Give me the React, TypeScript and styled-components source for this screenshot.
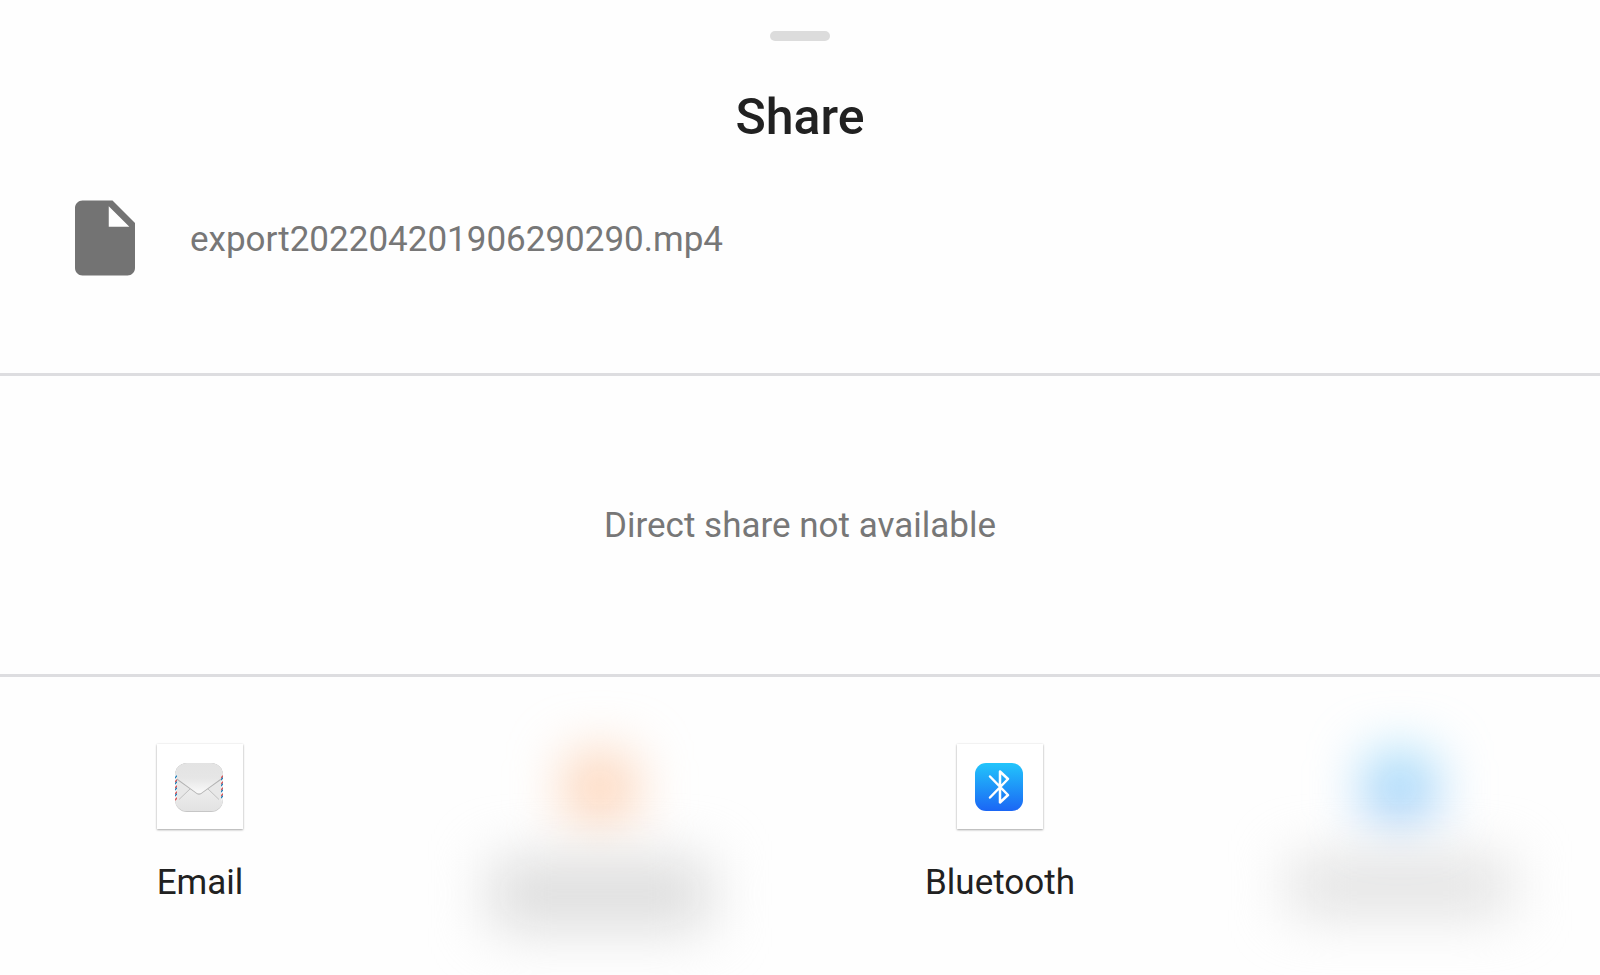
import React from "react";
import styled, { createGlobalStyle } from "styled-components";

const GlobalStyle = createGlobalStyle`
  * { box-sizing: border-box; }
  body {
    margin: 0;
    background: #fefefe;
    font-family: Roboto, "Liberation Sans", sans-serif;
    color: #212121;
  }
`;

const Sheet = styled.main`
  display: flex;
  flex-direction: column;
  min-height: 100vh;
  overflow: hidden;
`;

const Header = styled.header`
  display: flex;
  flex-direction: column;
  align-items: center;
  padding-top: 31px;
`;

const Handle = styled.div`
  width: 60px;
  height: 10px;
  border-radius: 5px;
  background: #dcdcdc;
`;

const Title = styled.h1`
  margin: 46px 0 0;
  font-size: 50px;
  line-height: 60px;
  font-weight: 500;
`;

const FileRow = styled.section`
  display: flex;
  align-items: center;
  gap: 40px;
  padding: 46px 60px 90px;
  border-bottom: 3px solid #dddde0;
`;

const FileIcon = styled.svg`
  width: 90px;
  height: 90px;
  flex: none;
  fill: #737373;
`;

const Body = styled.p`
  margin: 0;
  font-size: 35px;
  line-height: 44px;
  color: #777;
`;

const FileName = styled(Body)`
  padding-top: 4px;
`;

const DirectShare = styled.section`
  display: flex;
  align-items: center;
  justify-content: center;
  padding: 128px 60px 126px;
  border-bottom: 3px solid #dddde0;
`;

const Targets = styled.section`
  display: grid;
  grid-template-columns: repeat(4, 1fr);
  flex: 1;
  padding-top: 67px;
`;

const Target = styled.button`
  display: flex;
  flex-direction: column;
  align-items: center;
  justify-content: flex-start;
  gap: 32px;
  padding: 0;
  border: 0;
  background: none;
  font: inherit;
  color: inherit;
`;

const Tile = styled.span`
  display: flex;
  align-items: center;
  justify-content: center;
  width: 86px;
  height: 85px;
  background: #fff;
  box-shadow: 0 1px 2px rgba(0, 0, 0, 0.32), 0 0 2px rgba(0, 0, 0, 0.08);
`;

const AppIcon = styled.svg`
  width: 52px;
  height: 52px;
`;

const Label = styled.span`
  font-size: 35px;
  line-height: 44px;
`;

const IconBlur = styled.span<{ $fill: string }>`
  width: 64px;
  height: 64px;
  border-radius: 12px;
  background: ${(p) => p.$fill};
  filter: blur(28px);
`;

const LabelBlur = styled.span<{ $height: number; $color: string }>`
  width: 220px;
  height: ${(p) => p.$height}px;
  background: ${(p) => p.$color};
  filter: blur(28px);
`;

const BlurTarget = styled(Target)`
  gap: 40px;
  padding-top: 12px;
`;

const edgeMarks = [0, 1, 2, 3, 4, 5, 6, 7, 8, 9, 10, 11];
const markColors = ["#1e82bd", "#f3f3f3", "#d95558"];

function EmailIcon() {
  return (
    <AppIcon viewBox="1 0 52 52" aria-hidden="true">
      <defs>
        <linearGradient id="flap" x1="0" y1="0" x2="0" y2="1">
          <stop offset="0" stopColor="#e3e3e3" />
          <stop offset="0.5" stopColor="#e6e6e6" />
          <stop offset="1" stopColor="#fafafa" />
        </linearGradient>
        <linearGradient id="front" x1="0" y1="0" x2="0" y2="1">
          <stop offset="0" stopColor="#eeeeee" />
          <stop offset="1" stopColor="#e2e2e2" />
        </linearGradient>
        <clipPath id="envelope">
          <rect x="2" y="2" width="48" height="48" rx="12" />
        </clipPath>
      </defs>
      <rect x="2" y="3" width="48" height="48" rx="12" fill="#c6c6c6" />
      <g clipPath="url(#envelope)">
        <rect x="2" y="2" width="48" height="48" fill="#e8e8e8" />
        <path d="M2 43L19 27H33L50 43V50H2Z" fill="url(#front)" />
        <path d="M6 38.500L18 27M46 38.500L34 27" stroke="#c0c0c0" strokeWidth="1" />
        <path
          d="M2 2H50V17.500L29.500 32Q26 35.500 22.500 32L2 17.500Z"
          fill="#b4b4b4"
        />
        <path
          d="M2 2H50V16L29.500 31Q26 34 22.500 31L2 16Z"
          fill="url(#flap)"
        />
        {edgeMarks.map((i) => (
          <g key={i}>
            <rect x="2" y={15.500 + i * 2} width="1" height="2" fill={markColors[i % 3]} />
            <rect x="3" y={14.500 + i * 2} width="1" height="2" fill={markColors[i % 3]} />
            <rect x="48" y={15.500 + i * 2} width="1" height="2" fill={markColors[(i + 2) % 3]} />
            <rect x="49" y={14.500 + i * 2} width="1" height="2" fill={markColors[(i + 2) % 3]} />
          </g>
        ))}
      </g>
    </AppIcon>
  );
}

function BluetoothIcon() {
  return (
    <AppIcon viewBox="1 0 52 52" aria-hidden="true">
      <defs>
        <linearGradient id="sky" x1="0" y1="0" x2="0" y2="1">
          <stop offset="0" stopColor="#22c5fb" />
          <stop offset="1" stopColor="#1b66f5" />
        </linearGradient>
      </defs>
      <rect x="2" y="2" width="48" height="48" rx="11" fill="url(#sky)" />
      <path
        d="M17 15.500L35 34L27 41.500V10.500L35 18L17 36.500"
        fill="none"
        stroke="#fff"
        strokeWidth="2.500"
        strokeLinecap="round"
        strokeLinejoin="round"
      />
    </AppIcon>
  );
}

export default function App() {
  return (
    <>
      <GlobalStyle />
      <Sheet>
        <Header>
          <Handle />
          <Title>Share</Title>
        </Header>
        <FileRow>
          <FileIcon viewBox="0 0 24 24" aria-hidden="true">
            <path d="M6 2C4.900 2 4 2.900 4 4V20C4 21.100 4.900 22 6 22H18C19.100 22 20 21.100 20 20V8L14 2H6ZM13 9V3.500L18.500 9H13Z" />
          </FileIcon>
          <FileName>export202204201906290290.mp4</FileName>
        </FileRow>
        <DirectShare>
          <Body>Direct share not available</Body>
        </DirectShare>
        <Targets>
          <Target type="button">
            <Tile>
              <EmailIcon />
            </Tile>
            <Label>Email</Label>
          </Target>
          <BlurTarget type="button" aria-label="Hidden app">
            <IconBlur $fill="#fdcdac" />
            <LabelBlur $height={68} $color="#dcdcdc" />
          </BlurTarget>
          <Target type="button">
            <Tile>
              <BluetoothIcon />
            </Tile>
            <Label>Bluetooth</Label>
          </Target>
          <BlurTarget type="button" aria-label="Hidden app">
            <IconBlur $fill="linear-gradient(#8cdcfc, #93bcf5)" />
            <LabelBlur $height={52} $color="#dfdfdf" />
          </BlurTarget>
        </Targets>
      </Sheet>
    </>
  );
}
